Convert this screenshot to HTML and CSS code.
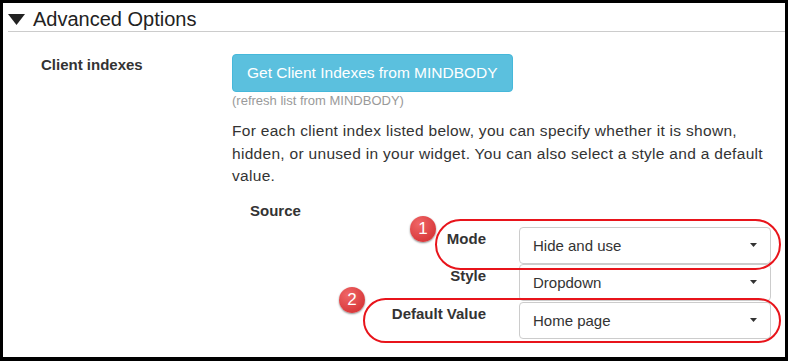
FILE: index.html
```html
<!DOCTYPE html>
<html lang="en">
<head>
  <meta charset="UTF-8">
  <meta name="viewport" content="width=device-width, initial-scale=1.0">
  <title>Advanced Options</title>
  <link rel="stylesheet" href="styles.css">
</head>
<body>

  <div class="frame">
    <div class="section-head">
      <svg class="toggle" width="17" height="11" viewBox="0 0 17 11"><polygon points="0,0 17,0 8.5,11" fill="#222"/></svg>
      <span>Advanced Options</span>
    </div>

    <div class="field">
      <label class="field-label">Client indexes</label>
      <div class="field-body">
        <button class="btn-info">Get Client Indexes from MINDBODY</button>
        <div class="help">(refresh list from MINDBODY)</div>
        <p class="intro">For each client index listed below, you can specify whether it is shown, hidden, or unused in your widget. You can also select a style and a default value.</p>

        <div class="source">Source</div>

        <div class="sub-row">
          <label class="sub-label">Mode</label>
          <div class="select"><span>Hide and use</span><svg width="7" height="4" viewBox="0 0 7 4"><polygon points="0,0 7,0 3.5,4" fill="#333"/></svg></div>
        </div>
        <div class="sub-row">
          <label class="sub-label">Style</label>
          <div class="select"><span>Dropdown</span><svg width="7" height="4" viewBox="0 0 7 4"><polygon points="0,0 7,0 3.5,4" fill="#333"/></svg></div>
        </div>
        <div class="sub-row last">
          <label class="sub-label">Default Value</label>
          <div class="select"><span>Home page</span><svg width="7" height="4" viewBox="0 0 7 4"><polygon points="0,0 7,0 3.5,4" fill="#333"/></svg></div>
        </div>
      </div>
    </div>

    <!-- annotations -->
    <div class="mark mark-1"></div>
    <div class="mark mark-2"></div>
    <div class="badge badge-1">1</div>
    <div class="badge badge-2">2</div>
  </div>

</body>
</html>
```

FILE: styles.css
```css
body {
  margin: 0;
  font-family: "Liberation Sans", Arial, sans-serif;
  color: #333;
}

.frame {
  position: relative;
  height: 361px;
  box-sizing: border-box;
  border: 3px solid #000;
  border-bottom-width: 4px;
  background: #fff;
  overflow: hidden;
}

.section-head {
  display: flex;
  align-items: center;
  margin-left: 5px;
  padding-top: 5px;
  padding-bottom: 1px;
  border-bottom: 1px solid #ccc;
  font-size: 20px;
  line-height: 22px;
  color: #222;
}

.toggle {
  margin-right: 8px;
  margin-top: 1px;
}

.field {
  display: flex;
  margin-top: 22px;
  padding-left: 38px;
}

.field-label {
  width: 191px;
  flex-shrink: 0;
  font-weight: bold;
  font-size: 15px;
  line-height: 21px;
}

.field-body {
  width: 539px;
}

.btn-info {
  display: block;
  height: 38px;
  padding: 0 14px;
  background: #5bc0de;
  border: 1px solid #46b8da;
  border-radius: 4px;
  color: #fff;
  font-family: inherit;
  font-size: 15.5px;
}

.help {
  font-size: 13px;
  line-height: 18px;
  color: #9a9a9a;
}

.intro {
  margin: 10px 0 0;
  font-size: 15.5px;
  letter-spacing: 0.3px;
  line-height: 22.5px;
}

.source {
  margin: 12px 0 0 18px;
  font-weight: bold;
  font-size: 15px;
  line-height: 21px;
}

.source + .sub-row {
  margin-top: 6px;
}

.sub-row {
  display: flex;
  gap: 33px;
}

.sub-row.last {
  margin-top: 1px;
}

.sub-label {
  width: 254px;
  padding-top: 1px;
  text-align: right;
  font-weight: bold;
  font-size: 15px;
  line-height: 21px;
}

.select {
  width: 252px;
  height: 37px;
  box-sizing: border-box;
  display: flex;
  align-items: center;
  justify-content: space-between;
  padding: 0 13px;
  border: 1px solid #ccc;
  border-radius: 4px;
  font-size: 15px;
  background: #fff;
}

.mark {
  position: absolute;
  box-sizing: border-box;
  border: 2px solid #e8141b;
}

.mark-1 {
  left: 432px;
  top: 216px;
  width: 346px;
  height: 51px;
  border-radius: 26px;
}

.mark-2 {
  left: 360px;
  top: 295px;
  width: 418px;
  height: 45px;
  border-radius: 23px;
}

.badge {
  position: absolute;
  width: 26px;
  height: 26px;
  border-radius: 50%;
  background: radial-gradient(circle at 35% 30%, #f06767, #d93b3d 70%);
  box-shadow: 0 1px 2px rgba(0,0,0,0.45);
  color: #fff;
  font-size: 17px;
  line-height: 26px;
  text-align: center;
}

.badge-1 {
  left: 407px;
  top: 213px;
}

.badge-2 {
  left: 336px;
  top: 284px;
}
```
